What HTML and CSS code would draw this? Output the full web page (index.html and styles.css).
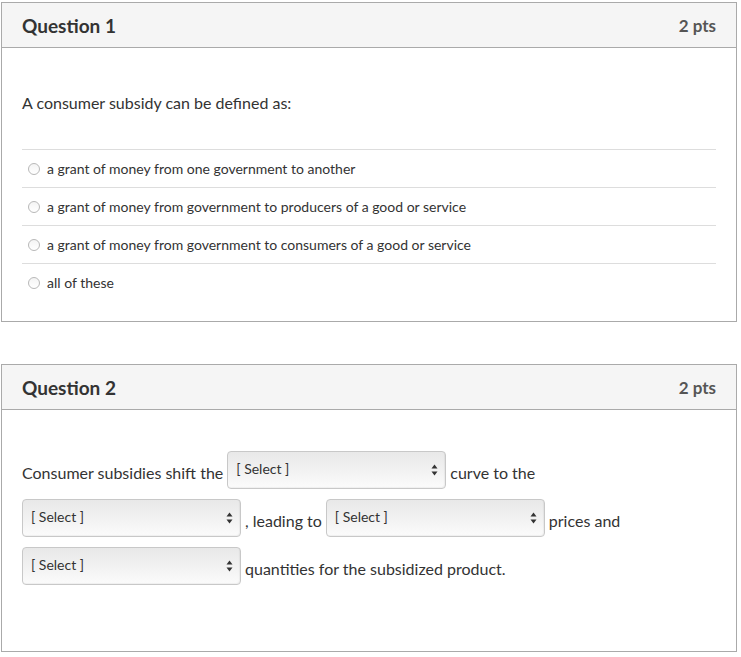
FILE: index.html
```html
<!DOCTYPE html>
<html lang="en">
<head>
<meta charset="utf-8">
<title>Quiz</title>
<link rel="stylesheet" href="styles.css">
</head>
<body>
<div class="page">
  <section class="question">
    <header class="q-header">
      <h2 class="q-title">Question 1</h2>
      <span class="q-pts">2 pts</span>
    </header>
    <div class="q-body">
      <p class="q-text">A consumer subsidy can be defined as:</p>
      <ul class="answers">
        <li class="answer"><span class="radio"></span><span>a grant of money from one government to another</span></li>
        <li class="answer"><span class="radio"></span><span>a grant of money from government to producers of a good or service</span></li>
        <li class="answer"><span class="radio"></span><span>a grant of money from government to consumers of a good or service</span></li>
        <li class="answer"><span class="radio"></span><span>all of these</span></li>
      </ul>
    </div>
  </section>

  <section class="question">
    <header class="q-header">
      <h2 class="q-title">Question 2</h2>
      <span class="q-pts">2 pts</span>
    </header>
    <div class="q-body q-body-fill">
      <div class="fill">
        <span class="fill-text">Consumer subsidies shift the</span>
        <span class="select"><span class="select-label">[ Select ]</span><svg class="arrows" width="7" height="12" viewBox="0 0 7 12"><path d="M3.5 0.5 L6.5 4.5 L0.5 4.5 Z M3.5 11.5 L6.5 7.5 L0.5 7.5 Z" fill="#333"/></svg></span>
        <span class="fill-text">curve to the</span>
        <span class="select"><span class="select-label">[ Select ]</span><svg class="arrows" width="7" height="12" viewBox="0 0 7 12"><path d="M3.5 0.5 L6.5 4.5 L0.5 4.5 Z M3.5 11.5 L6.5 7.5 L0.5 7.5 Z" fill="#333"/></svg></span>
        <span class="fill-text">, leading to</span>
        <span class="select"><span class="select-label">[ Select ]</span><svg class="arrows" width="7" height="12" viewBox="0 0 7 12"><path d="M3.5 0.5 L6.5 4.5 L0.5 4.5 Z M3.5 11.5 L6.5 7.5 L0.5 7.5 Z" fill="#333"/></svg></span>
        <span class="fill-text">prices and</span>
        <span class="select"><span class="select-label">[ Select ]</span><svg class="arrows" width="7" height="12" viewBox="0 0 7 12"><path d="M3.5 0.5 L6.5 4.5 L0.5 4.5 Z M3.5 11.5 L6.5 7.5 L0.5 7.5 Z" fill="#333"/></svg></span>
        <span class="fill-text">quantities for the subsidized product.</span>
      </div>
    </div>
  </section>
</div>
</body>
</html>
```

FILE: styles.css
```css
* { box-sizing: border-box; }
html, body { margin: 0; padding: 0; background: #fff; }
body {
  font-family: Lato, "Open Sans", "Liberation Sans", sans-serif;
  color: #333;
}
.page {
  padding: 2px 4px 0 1px;
  display: flex;
  flex-direction: column;
  gap: 42px;
}
.question {
  border: 1px solid #aaa;
  width: 736px;
}
.q-header {
  background: #f5f5f5;
  border-bottom: 1px solid #aaa;
  height: 45px;
  display: flex;
  align-items: center;
  justify-content: space-between;
  padding: 0 20px 0 20px;
}
.q-title {
  margin: 0;
  font-size: 19px;
  font-weight: 700;
  color: #333;
}
.q-pts {
  font-size: 17px;
  font-weight: 700;
  color: #555;
}
.q-body {
  padding: 0 20px 20px 20px;
}
.q-text {
  margin: 0;
  padding-top: 44px;
  height: 101px;
  font-size: 16px;
  line-height: 21px;
}
.answers {
  list-style: none;
  margin: 0;
  padding: 0;
}
.answer {
  height: 38px;
  border-top: 1px solid #ddd;
  display: flex;
  align-items: center;
  gap: 7px;
  padding-left: 6px;
  font-size: 14px;
  color: #333;
}
.radio {
  width: 12px;
  height: 12px;
  border-radius: 50%;
  border: 1px solid #b8b8b8;
  background: linear-gradient(#f4f4f4, #fff);
  flex: none;
}
.q-body-fill {
  padding-top: 41px;
  padding-bottom: 66px;
}
.fill {
  display: flex;
  flex-wrap: wrap;
  align-items: center;
  column-gap: 4px;
  row-gap: 10px;
  font-size: 16px;
}
.fill-text {
  padding-top: 5px;
}
.select {
  width: 219px;
  height: 38px;
  border: 1px solid #c8c8c8;
  border-radius: 4px;
  background: linear-gradient(#e8e8e8, #fbfbfb);
  box-shadow: inset -1px -1px 1px rgba(0,0,0,0.05);
  display: flex;
  align-items: center;
  justify-content: space-between;
  padding: 0 7px 3px 8px;
}
.select-label {
  font-size: 14px;
  color: #333;
}
.arrows {
  display: block;
  margin-top: 3px;
}
```
